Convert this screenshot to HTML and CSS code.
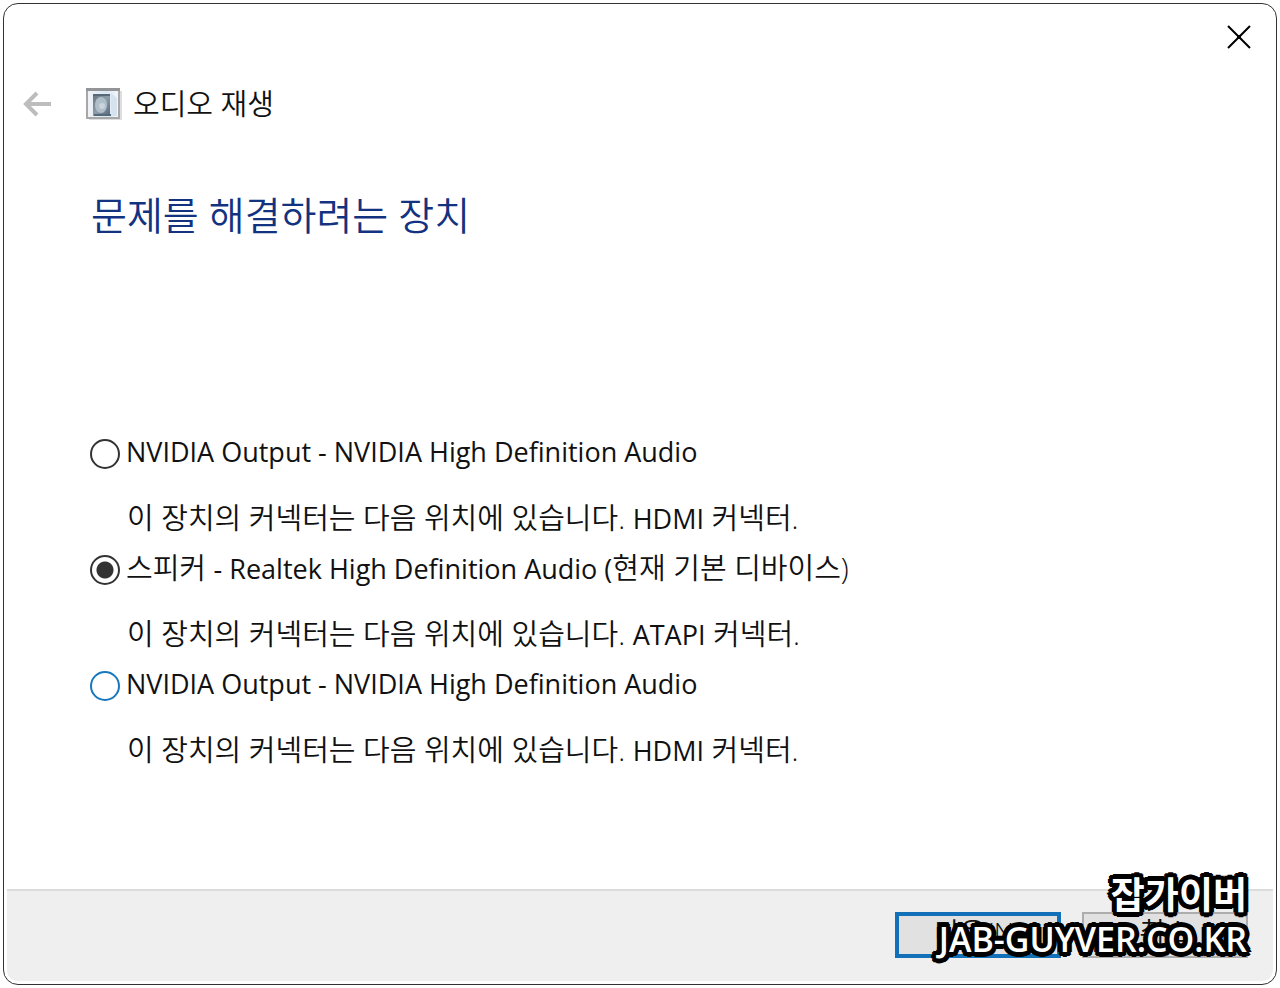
FILE: index.html
```html
<!DOCTYPE html>
<html lang="ko">
<head>
<meta charset="utf-8">
<meta name="viewport" content="width=device-width, initial-scale=1">
<title>오디오 재생</title>
<link rel="stylesheet" href="styles.css">
</head>
<body>
<div class="window">
  <header class="titlebar">
    <button class="icon-button close" type="button" aria-label="닫기">
      <svg width="24" height="24" viewBox="0 0 24 24" fill="none" stroke="#000" stroke-width="2"><path d="M1 1 23 23M23 1 1 23"/><path d="M10 12H14" stroke-width="4"/></svg>
    </button>
  </header>
  <div class="heading-row">
    <button class="icon-button back" type="button" aria-label="뒤로" disabled>
      <svg width="28" height="26" viewBox="0 0 28 26" fill="none" stroke="#bdbdbd" stroke-width="4"><path d="M28 13H3M14 2 3 13 14 24"/></svg>
    </button>
    <svg class="app-icon" width="36" height="32" viewBox="0 0 36 32">
      <defs>
        <linearGradient id="pane" x1="0" x2="1"><stop offset="0" stop-color="#f1f3f5"/><stop offset=".6" stop-color="#dbe7f2"/><stop offset="1" stop-color="#f4f7fa"/></linearGradient>
        <linearGradient id="speaker" x1="0" x2="1" y1="0" y2="1"><stop offset="0" stop-color="#65737f"/><stop offset=".5" stop-color="#8d9dab"/><stop offset="1" stop-color="#536779"/></linearGradient>
      </defs>
      <path d="M3 31H35V3" fill="none" stroke="#dedede" stroke-width="2"/>
      <rect x="1" y="1" width="32" height="29" fill="url(#pane)" stroke="#a5a7a9" stroke-width="2"/>
      <path d="M0 1.5H34" stroke="#929497" stroke-width="3"/>
      <path d="M25 5 31 10V28H25Z" fill="#d6e3ee"/>
      <rect x="7" y="6" width="17" height="22" fill="url(#speaker)"/>
      <path d="M7 7H24M8 27H25" stroke="#566978" stroke-width="2"/>
      <ellipse cx="15" cy="17" rx="6" ry="8" fill="#afbec9"/>
      <circle cx="16" cy="18" r="3" fill="#c9d4dc"/>
    </svg>
    <span class="app-title">오디오 재생</span>
  </div>
  <main class="content">
    <h1 class="question">문제를 해결하려는 장치</h1>
    <form class="devices" id="devices">
      <div class="device">
        <label class="choice"><input class="radio" type="radio" name="device" aria-describedby="d1"><span class="latin">NVIDIA Output - NVIDIA High Definition Audio</span></label>
        <p class="detail" id="d1">이 장치의 커넥터는 다음 위치에 있습니다. <span class="latin">HDMI</span> 커넥터.</p>
      </div>
      <div class="device">
        <label class="choice"><input class="radio" type="radio" name="device" aria-describedby="d2" checked><span>스피커 <span class="latin">- Realtek High Definition Audio (</span>현재 기본 디바이스)</span></label>
        <p class="detail" id="d2">이 장치의 커넥터는 다음 위치에 있습니다. <span class="latin">ATAPI</span> 커넥터.</p>
      </div>
      <div class="device">
        <label class="choice"><input class="radio radio-hot" type="radio" name="device" aria-describedby="d3"><span class="latin">NVIDIA Output - NVIDIA High Definition Audio</span></label>
        <p class="detail" id="d3">이 장치의 커넥터는 다음 위치에 있습니다. <span class="latin">HDMI</span> 커넥터.</p>
      </div>
    </form>
  </main>
  <footer class="footer">
    <button class="button button-primary" type="submit" form="devices">다음(N)</button>
    <button class="button" type="button">취소</button>
    <div class="watermark"><span class="watermark-name">잡가이버</span><span>JAB-GUYVER.CO.KR</span></div>
  </footer>
</div>
</body>
</html>
```
FILE: styles.css
```css
* { box-sizing: border-box; }

body {
  margin: 0;
  padding: 3px;
  min-height: 100vh;
  background: #fff;
  color: #111;
  font: 350 29px/36px "Open Sans", "Noto Sans CJK KR", sans-serif;
}

.window {
  display: flex;
  flex-direction: column;
  min-height: calc(100vh - 6px);
  padding: 3px;
  border: 1px solid #333;
  border-radius: 15px;
}

.titlebar {
  display: flex;
  justify-content: flex-end;
  padding: 18px 22px;
}

.icon-button {
  display: block;
  padding: 0;
  border: 0;
  background: none;
  line-height: 0;
}

.heading-row {
  display: flex;
  align-items: center;
  padding: 19px 16px 12px;
}

.app-icon { margin-left: 35px; }
.app-title { margin-left: 11px; }

.content {
  flex: 1;
  padding: 55px 84px 0;
}

.question {
  margin: 0;
  color: #133280;
  font-size: 39px;
  font-weight: 350;
  line-height: 52px;
}

.devices {
  display: flex;
  flex-direction: column;
  gap: 14px;
  margin-top: 193px;
}

.device {
  display: flex;
  flex-direction: column;
  gap: 30px;
}

.choice {
  display: flex;
  align-items: center;
  gap: 6px;
  height: 36px;
  margin-left: -1px;
}

.latin {
  font-size: 27px;
  font-weight: 400;
  line-height: 28px;
}

.detail {
  margin: 0;
  padding-left: 36px;
}

.radio {
  flex: none;
  appearance: none;
  width: 30px;
  height: 30px;
  margin: 4px 0 0;
  border: 2px solid #333;
  border-radius: 50%;
  background: #fff;
}

.radio:checked { background: radial-gradient(circle, #333 8px, #fff 9px); }
.radio-hot { border-color: #1878bd; }

.footer {
  position: relative;
  display: flex;
  justify-content: flex-end;
  gap: 21px;
  padding: 21px 25px 23px;
  border-top: 2px solid #dcdcdc;
  border-radius: 0 0 11px 11px;
  background: #efefef;
}

.button {
  width: 166px;
  height: 46px;
  padding: 0 0 6px;
  border: 2px solid #adadad;
  background: #e1e1e1;
  color: #111;
  font: inherit;
  font-size: 28px;
  line-height: 32px;
}

.button-primary { border: 4px solid #1270b8; }

.watermark {
  position: absolute;
  right: 26px;
  bottom: 19px;
  display: flex;
  flex-direction: column;
  align-items: flex-end;
  color: #fff;
  font-size: 34px;
  font-weight: 600;
  line-height: 45px;
  text-shadow:
    5px 0 #000, -5px 0 #000, 0 5px #000, 0 -5px #000,
    4px 3px #000, -4px 3px #000, 4px -3px #000, -4px -3px #000,
    3px 4px #000, -3px 4px #000, 3px -4px #000, -3px -4px #000,
    2px 2px #000, -2px 2px #000, 2px -2px #000, -2px -2px #000;
}

.watermark-name {
  font-size: 37px;
  font-weight: 700;
}
```
